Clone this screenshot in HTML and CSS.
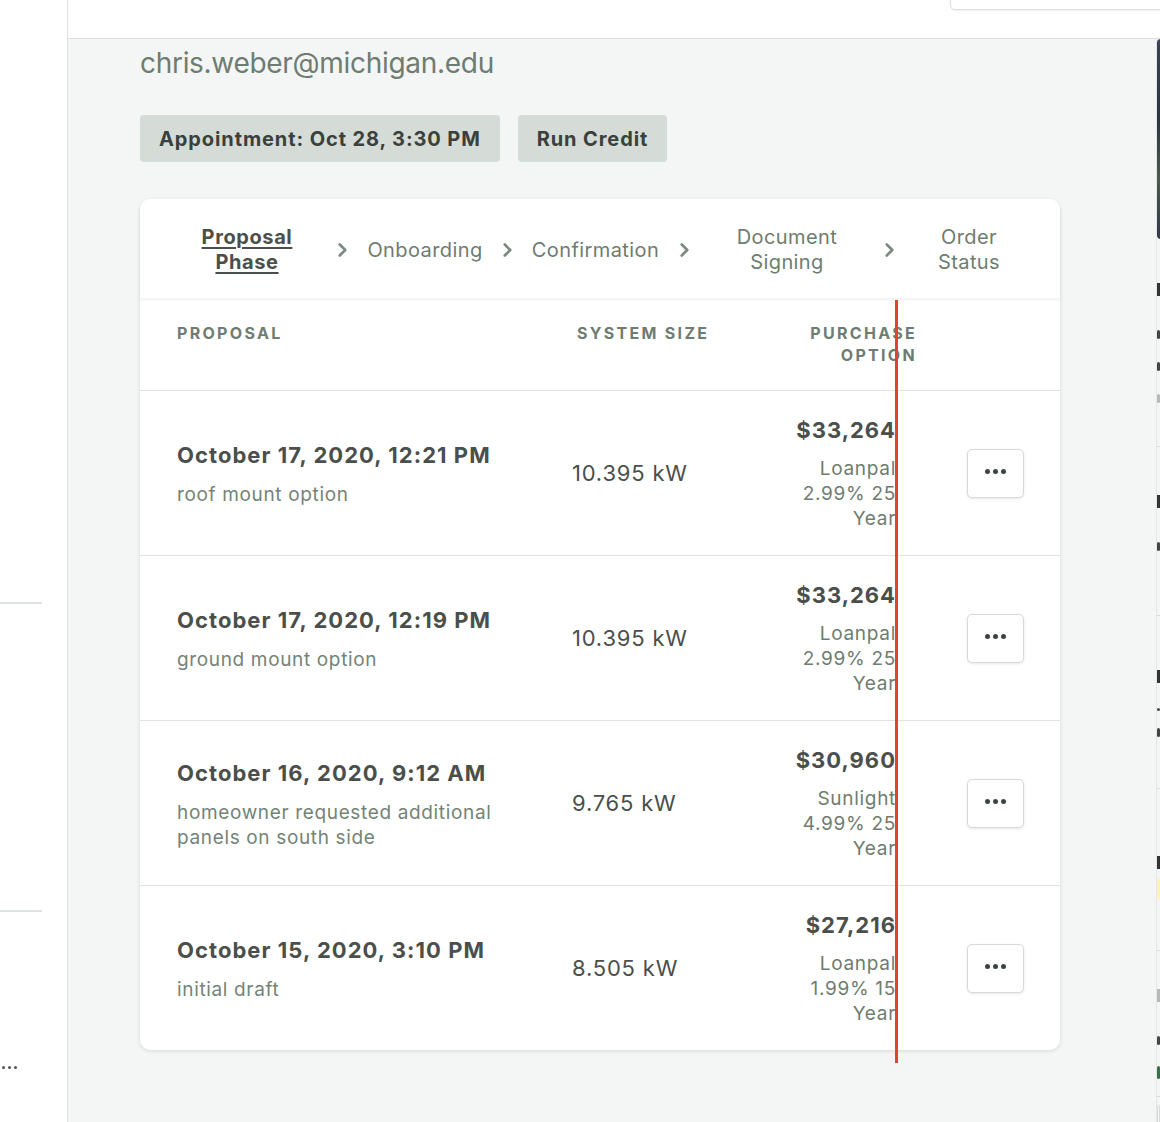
FILE: index.html
```html
<!DOCTYPE html>
<html lang="en">
<head>
    <meta charset="UTF-8">
    <meta name="viewport" content="width=device-width, initial-scale=1.0">
    <title>Proposals - chris.weber@michigan.edu</title>
    <link rel="stylesheet" href="styles.css">
</head>
<body>
    <aside class="sidebar">
        <div class="side-line first"></div>
        <div class="side-line second"></div>
        <div class="side-more"><span></span><span></span><span></span></div>
    </aside>

    <div class="main">
        <header class="topbar">
            <div class="search-box"></div>
        </header>

        <div class="body-wrap">
            <section class="content">
                <div class="email">chris.weber@michigan.edu</div>

                <div class="actions">
                    <button class="btn">Appointment: Oct 28, 3:30 PM</button>
                    <button class="btn">Run Credit</button>
                </div>

                <div class="card">
                    <nav class="steps">
                        <a class="step active step-proposal">Proposal<br>Phase</a>
                        <svg class="chev" viewBox="0 0 10 14"><polyline points="2.5,2 7.5,7 2.5,12"/></svg>
                        <a class="step step-onboarding">Onboarding</a>
                        <svg class="chev" viewBox="0 0 10 14"><polyline points="2.5,2 7.5,7 2.5,12"/></svg>
                        <a class="step step-confirm">Confirmation</a>
                        <svg class="chev" viewBox="0 0 10 14"><polyline points="2.5,2 7.5,7 2.5,12"/></svg>
                        <a class="step step-doc">Document<br>Signing</a>
                        <svg class="chev" viewBox="0 0 10 14"><polyline points="2.5,2 7.5,7 2.5,12"/></svg>
                        <a class="step step-order">Order<br>Status</a>
                    </nav>

                    <div class="row head">
                        <div class="th">Proposal</div>
                        <div class="th th-size">System Size</div>
                        <div class="th th-price">Purchase Option</div>
                        <div></div>
                    </div>

                    <div class="row">
                        <div class="cell-name">
                            <div class="p-title">October 17, 2020, 12:21 PM</div>
                            <div class="p-note">roof mount option</div>
                        </div>
                        <div class="cell-size">10.395 kW</div>
                        <div class="cell-price">
                            <div class="price">$33,264</div>
                            <div class="plan">Loanpal 2.99% 25 Year</div>
                        </div>
                        <div class="cell-menu"><button class="kebab"><span></span><span></span><span></span></button></div>
                    </div>

                    <div class="row">
                        <div class="cell-name">
                            <div class="p-title">October 17, 2020, 12:19 PM</div>
                            <div class="p-note">ground mount option</div>
                        </div>
                        <div class="cell-size">10.395 kW</div>
                        <div class="cell-price">
                            <div class="price">$33,264</div>
                            <div class="plan">Loanpal 2.99% 25 Year</div>
                        </div>
                        <div class="cell-menu"><button class="kebab"><span></span><span></span><span></span></button></div>
                    </div>

                    <div class="row">
                        <div class="cell-name">
                            <div class="p-title">October 16, 2020, 9:12 AM</div>
                            <div class="p-note">homeowner requested additional panels on south side</div>
                        </div>
                        <div class="cell-size">9.765 kW</div>
                        <div class="cell-price">
                            <div class="price">$30,960</div>
                            <div class="plan">Sunlight 4.99% 25 Year</div>
                        </div>
                        <div class="cell-menu"><button class="kebab"><span></span><span></span><span></span></button></div>
                    </div>

                    <div class="row last">
                        <div class="cell-name">
                            <div class="p-title">October 15, 2020, 3:10 PM</div>
                            <div class="p-note">initial draft</div>
                        </div>
                        <div class="cell-size">8.505 kW</div>
                        <div class="cell-price">
                            <div class="price">$27,216</div>
                            <div class="plan">Loanpal 1.99% 15 Year</div>
                        </div>
                        <div class="cell-menu"><button class="kebab"><span></span><span></span><span></span></button></div>
                    </div>

                    <div class="red-marker"></div>
                </div>
            </section>

            <!-- customer detail panel, only its left edge is on screen -->
            <aside class="right-panel">
                <div class="rp-photo"></div>
                <div class="rp-group g1">
                    <div class="rp-label"><i></i></div>
                    <div class="rp-value first"><i></i></div>
                    <div class="rp-value"><i></i></div>
                    <div class="rp-value faint"><i></i></div>
                </div>
                <div class="rp-group g2">
                    <div class="rp-label"><i></i></div>
                    <div class="rp-value first"><i></i></div>
                </div>
                <div class="rp-group g3">
                    <div class="rp-label"><i></i></div>
                    <div class="rp-value first tiny"><i></i></div>
                    <div class="rp-value"><i></i></div>
                </div>
                <div class="rp-group g4">
                    <div class="rp-label"><i></i></div>
                    <div class="rp-badge"></div>
                </div>
                <div class="rp-group g5">
                    <div class="rp-label faint"><i></i></div>
                    <div class="rp-value first"><i></i></div>
                    <div class="rp-value green"><i></i></div>
                </div>
                <div class="rp-box"></div>
            </aside>
        </div>
    </div>
</body>
</html>
```

FILE: styles.css
```css
* {
    box-sizing: border-box;
}
body {
    margin: 0;
    height: 1122px;
    overflow: hidden;
    display: flex;
    font-family: Inter, "Noto Sans", Arial, sans-serif;
    background-color: #f4f6f5;
    color: #4a4f4c;
}

/* left nav */
.sidebar {
    width: 68px;
    flex-shrink: 0;
    background: #fff;
    border-right: 1px solid #dde1df;
    padding-top: 602px;
}
.side-line {
    width: 42px;
    height: 2px;
    background: #dfe4e1;
}
.side-line.second {
    margin-top: 306px;
}
.side-more {
    display: flex;
    gap: 3px;
    margin: 154px 0 0 2px;
}
.side-more span {
    width: 3px;
    height: 3px;
    border-radius: 50%;
    background: #555;
}

/* main column */
.main {
    flex: 1;
    display: flex;
    flex-direction: column;
    min-width: 0;
}
.topbar {
    height: 39px;
    flex-shrink: 0;
    background: #fff;
    border-bottom: 1px solid #dcdfdd;
    display: flex;
    justify-content: flex-end;
    overflow: hidden;
}
.search-box {
    width: 212px;
    height: 10px;
    margin-right: -2px;
    border: 1px solid #dadedc;
    border-top: none;
    border-radius: 0 0 0 5px;
    box-shadow: 0 1px 2px rgba(0,0,0,0.06);
}
.body-wrap {
    flex: 1;
    display: flex;
    min-height: 0;
}
.content {
    flex: 1;
    padding: 6px 0 0 72px;
}
.email {
    font-size: 28px;
    line-height: 36px;
    color: #6e7c71;
    letter-spacing: -0.3px;
}
.actions {
    display: flex;
    gap: 18px;
    margin-top: 34px;
}
.btn {
    height: 47px;
    padding: 0 19px;
    border: none;
    border-radius: 4px;
    background-color: #d5dcd8;
    color: #3a413c;
    font-family: inherit;
    font-size: 20px;
    font-weight: 700;
    letter-spacing: 0.9px;
}

/* proposals card */
.card {
    position: relative;
    width: 920px;
    margin-top: 37px;
    background: #fff;
    border-radius: 10px;
    box-shadow: 0 1px 4px rgba(0,0,0,0.12);
}
.steps {
    position: relative;
    z-index: 1;
    height: 99px;
    display: flex;
    align-items: center;
    padding: 3px 0 0 40px;
    border-radius: 10px 10px 0 0;
    box-shadow: 0 2px 3px rgba(0,0,0,0.06);
    background: #fff;
}
.step {
    font-size: 20px;
    line-height: 25px;
    color: #6e7c71;
    text-align: center;
    letter-spacing: 0.4px;
}
.step.active {
    color: #4a4f4c;
    font-weight: 700;
    letter-spacing: 0.6px;
    text-decoration: underline;
    text-underline-offset: 3px;
}
.step-proposal { width: 134px; }
.step-onboarding { width: 116px; }
.step-confirm { width: 129px; }
.step-doc { width: 150px; margin-left: 4px; }
.step-order { width: 110px; }
.chev {
    width: 11px;
    height: 16px;
    margin: 0 18px 0 19px;
    fill: none;
    stroke: #7b897e;
    stroke-width: 2.4;
    stroke-linecap: round;
    stroke-linejoin: round;
}
.step-proposal + .chev { margin-left: 23px; margin-right: 19px; }
.step-doc + .chev { margin-left: 22px; margin-right: 19px; }

.row {
    display: grid;
    grid-template-columns: 395px 214px 129px 1fr;
    align-items: center;
    height: 165px;
    padding: 0 36px 0 37px;
    border-bottom: 1px solid #dfe3e1;
}
.row.last {
    height: 164px;
    border-bottom: none;
}
.row.head {
    height: 93px;
    align-items: start;
    padding-top: 24px;
}
.th {
    font-size: 16px;
    line-height: 22px;
    font-weight: 700;
    letter-spacing: 2.3px;
    text-transform: uppercase;
    color: #6e7c71;
}
.th-size { padding-left: 5px; }
.th-price {
    text-align: right;
    margin-right: -2px;
}

.cell-name { padding: 2px 30px 0 0; }
.p-title {
    font-size: 22px;
    line-height: 28px;
    font-weight: 700;
    color: #4a4f4c;
    letter-spacing: 1.05px;
}
.p-note {
    margin-top: 13px;
    font-size: 19px;
    line-height: 25px;
    color: #748377;
    letter-spacing: 0.65px;
}
.cell-size {
    font-size: 22px;
    color: #4a4f4c;
    letter-spacing: 0.8px;
}
.cell-price {
    text-align: right;
    padding-right: 19px;
}
.price {
    font-size: 22px;
    line-height: 28px;
    font-weight: 700;
    color: #4a4f4c;
    margin-bottom: 12px;
    letter-spacing: 1px;
}
.plan {
    font-size: 19px;
    line-height: 25px;
    color: #6e7c71;
    letter-spacing: 0.7px;
}
.cell-menu {
    display: flex;
    justify-content: flex-end;
}
.kebab {
    width: 57px;
    height: 49px;
    display: flex;
    align-items: center;
    justify-content: center;
    gap: 3px;
    padding: 0 0 3px;
    background: #fff;
    border: 1px solid #d5dad7;
    border-radius: 5px;
    box-shadow: 0 1px 3px rgba(0,0,0,0.1);
}
.kebab span {
    width: 5px;
    height: 5px;
    border-radius: 50%;
    background: #3d4440;
}

/* review annotation drawn over the table */
.red-marker {
    position: absolute;
    left: 755px;
    top: 101px;
    width: 3px;
    height: 763px;
    background: #e4432b;
    z-index: 2;
}

/* detail panel, mostly off screen */
.right-panel {
    width: 4px;
    flex-shrink: 0;
    overflow: hidden;
    border-left: 1px solid #e4e7e5;
}
.rp-photo {
    width: 200px;
    height: 200px;
    background: linear-gradient(180deg, #3b4450, #2c3440 40%, #4a5a4e 70%, #323848);
    border-radius: 4px;
}
.rp-group {
    border-bottom: 1px solid #d8dcda;
}
.rp-label, .rp-value {
    height: 32px;
    display: flex;
    align-items: center;
}
.rp-label i, .rp-value i {
    display: block;
    width: 3px;
    height: 13px;
    background: #333;
}
.rp-value i {
    height: 9px;
    border-radius: 2px;
    background: #444;
}
.faint i { background: #b5bab7; }
.tiny i { height: 3px; }
.green i { background: #3b6e4a; height: 13px; }
.rp-value.first { margin-top: 13px; }
.g1 { padding: 34px 0 32px; }
.g2 { padding: 38px 0 53px; }
.g3 { padding: 44px 0 40px; }
.g3 .rp-value.first { height: 14px; margin-top: 10px; }
.g4 { padding: 57px 0 50px; }
.g5 { padding: 28px 0 8px; }
.rp-badge {
    width: 60px;
    height: 22px;
    background: #fdf1c0;
    border-radius: 4px;
    margin-top: 0;
}
.rp-box {
    height: 60px;
    margin-top: 8px;
    border: 1px solid #d6dad8;
    border-radius: 4px;
}
```
